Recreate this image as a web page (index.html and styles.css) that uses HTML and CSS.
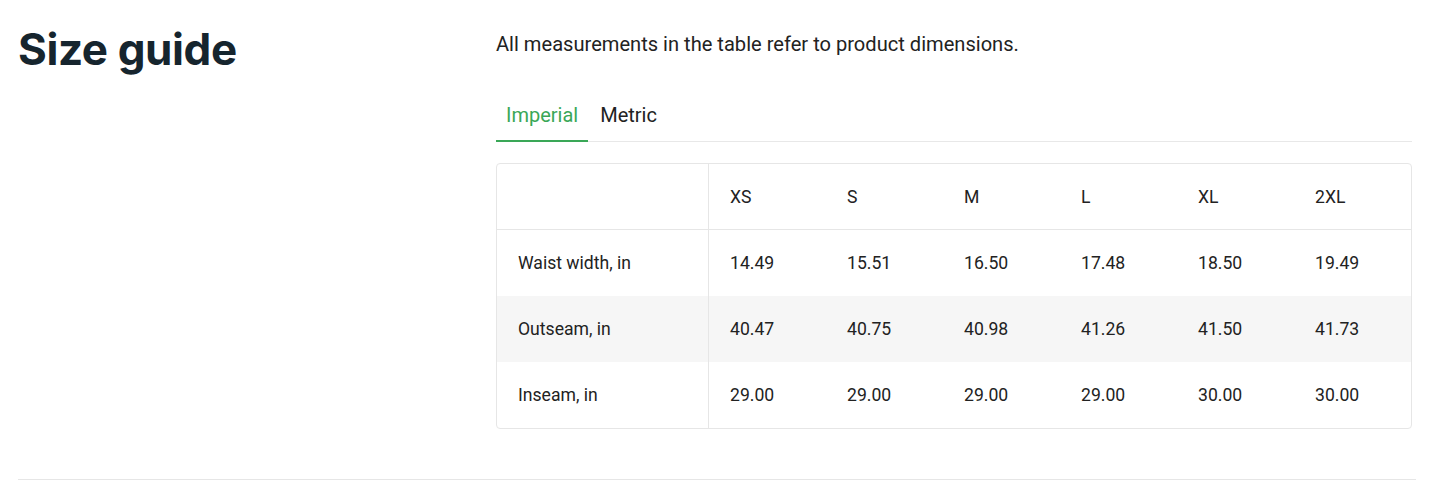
FILE: index.html
```html
<!DOCTYPE html>
<html lang="en">
<head>
    <meta charset="UTF-8">
    <meta name="viewport" content="width=device-width, initial-scale=1.0">
    <title>Size guide</title>
    <link rel="stylesheet" href="styles.css">
</head>
<body>
    <div class="container">
        <div class="size-guide">
            <h1 class="title">Size guide</h1>

            <div class="guide-body">
                <p class="intro">All measurements in the table refer to product dimensions.</p>

                <div class="tabs">
                    <button class="tab active">Imperial</button>
                    <button class="tab">Metric</button>
                </div>

                <table class="size-table">
                    <thead>
                        <tr>
                            <th class="label-col"></th>
                            <th>XS</th>
                            <th>S</th>
                            <th>M</th>
                            <th>L</th>
                            <th>XL</th>
                            <th>2XL</th>
                        </tr>
                    </thead>
                    <tbody>
                        <tr>
                            <td class="label-col">Waist width, in</td>
                            <td>14.49</td>
                            <td>15.51</td>
                            <td>16.50</td>
                            <td>17.48</td>
                            <td>18.50</td>
                            <td>19.49</td>
                        </tr>
                        <tr>
                            <td class="label-col">Outseam, in</td>
                            <td>40.47</td>
                            <td>40.75</td>
                            <td>40.98</td>
                            <td>41.26</td>
                            <td>41.50</td>
                            <td>41.73</td>
                        </tr>
                        <tr>
                            <td class="label-col">Inseam, in</td>
                            <td>29.00</td>
                            <td>29.00</td>
                            <td>29.00</td>
                            <td>29.00</td>
                            <td>30.00</td>
                            <td>30.00</td>
                        </tr>
                    </tbody>
                </table>
            </div>
        </div>

        <hr class="divider">
    </div>
</body>
</html>
```

FILE: styles.css
```css
* {
    margin: 0;
    padding: 0;
    box-sizing: border-box;
}

body {
    font-family: Roboto, 'Liberation Sans', sans-serif;
    background: #fff;
    color: #222;
}

.container {
    padding: 0 18px;
}

.size-guide {
    display: grid;
    grid-template-columns: 478px 1fr;
    padding-right: 4px;
}

.title {
    font-family: Inter, 'Noto Sans', sans-serif;
    font-size: 44px;
    font-weight: 700;
    line-height: 1;
    color: #16252e;
    padding-top: 27px;
    letter-spacing: -0.4px;
}

.guide-body {
    padding-top: 32px;
}

.intro {
    font-size: 20.1px;
    line-height: 24px;
    color: #222;
}

.tabs {
    display: flex;
    gap: 2px;
    margin-top: 38px;
    border-bottom: 1px solid #e8e8e8;
}

.tab {
    font-family: inherit;
    font-size: 20px;
    line-height: 24px;
    color: #222;
    background: none;
    border: none;
    padding: 9px 10px 13px;
    margin-bottom: -1px;
    border-bottom: 2px solid transparent;
    cursor: pointer;
}

.tab.active {
    color: #3aa757;
    border-bottom-color: #3aa757;
}

.size-table {
    width: 100%;
    margin-top: 21px;
    table-layout: fixed;
    border-collapse: separate;
    border-spacing: 0;
    border: 1px solid #e6e6e6;
    border-radius: 4px;
    font-size: 17.6px;
}

.size-table th,
.size-table td {
    height: 66px;
    padding: 0 0 0 21px;
    text-align: left;
    font-weight: 400;
    color: #222;
}

.size-table thead th {
    border-bottom: 1px solid #e6e6e6;
}

.size-table .label-col {
    width: 212px;
    border-right: 1px solid #e6e6e6;
}

.size-table tbody tr:nth-child(2) td {
    background: #f6f6f6;
}

.divider {
    border: none;
    border-top: 1px solid #e6e6e6;
    margin-top: 50px;
}
```
